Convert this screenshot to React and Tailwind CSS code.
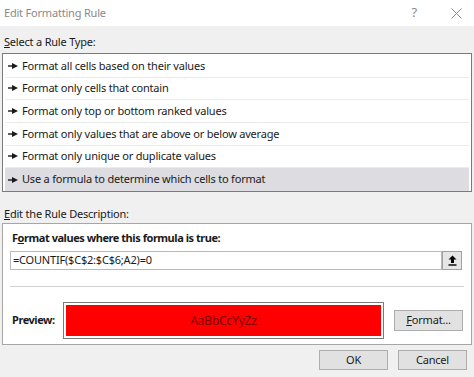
const RULES = [
  'Format all cells based on their values',
  'Format only cells that contain',
  'Format only top or bottom ranked values',
  'Format only values that are above or below average',
  'Format only unique or duplicate values',
  'Use a formula to determine which cells to format',
];

function Bullet() {
  return (
    <svg width="10" height="8" viewBox="0 0 10 8" className="mr-[4px] shrink-0">
      <rect x="0" y="3.3" width="5" height="1.4" fill="#1a1a1a" />
      <polygon points="4,1 10,4 4,7" fill="#1a1a1a" />
    </svg>
  );
}

export default function App() {
  return (
    <div
      className="flex h-[377px] w-[474px] flex-col overflow-hidden bg-[#f0f0f0] text-[11px] tracking-[-0.2px] text-[#1a1a1a]"
      style={{ fontFamily: "'Noto Sans', 'Open Sans', sans-serif" }}
    >
      <div className="flex h-[26px] shrink-0 items-center bg-white pl-[4px] pr-[12px] text-[#8a8a8a]">
        <span className="flex-1">Edit Formatting Rule</span>
        <span className="mr-[34px] text-[13px]">?</span>
        <svg width="11" height="11" viewBox="0 0 11 11">
          <path d="M0.5 0.5 L10.5 10.5 M10.5 0.5 L0.5 10.5" stroke="#8a8a8a" strokeWidth="1" />
        </svg>
      </div>

      <div className="flex flex-col px-[2px]">
        <div className="mt-[8px] h-[16px] pl-[2px] leading-[16px]">
          <span className="underline">S</span>elect a Rule Type:
        </div>
        <div className="mt-[3px] flex h-[139px] flex-col border border-[#7a7a7a] bg-white px-[2px] pt-[1px]">
          {RULES.map((r, i) => (
            <div
              key={r}
              className={
                'flex h-[22.67px] shrink-0 items-center pl-[3px] ' +
                (i === RULES.length - 1 ? 'bg-[#dcdce1]' : 'border-b border-[#ececec]')
              }
            >
              <Bullet />
              <span>{r}</span>
            </div>
          ))}
        </div>

        <div className="mt-[14px] h-[16px] pl-[2px] leading-[16px]">
          <span className="underline">E</span>dit the Rule Description:
        </div>
        <div className="mt-[1px] flex h-[122px] flex-col border border-[#a6a6a6] bg-white px-[7px]">
          <div className="mt-[6px] h-[16px] pl-[2px] font-bold leading-[16px] tracking-[-0.45px]">
            F<span className="underline">o</span>rmat values where this formula is true:
          </div>
          <div className="mt-[5px] flex h-[19px] items-stretch pr-[2px]">
            <div className="flex flex-1 items-center border border-[#b9b9b9] bg-white pl-[2px]">
              =COUNTIF($C$2:$C$6;A2)=0
            </div>
            <div className="flex w-[20px] items-center justify-center border border-[#a0a0a0] bg-[#e6e6e6]">
              <svg width="9" height="11" viewBox="0 0 9 11">
                <polygon points="4.5,0.5 8.5,4.5 6,4.5 6,8 3,8 3,4.5 0.5,4.5" fill="#000" />
                <rect x="0.5" y="9.3" width="8" height="1.4" fill="#000" />
              </svg>
            </div>
          </div>
          <div className="mt-[16px] h-px bg-[#d2d2d2]" />
          <div className="mt-[15px] flex items-center pl-[2px]">
            <span className="w-[51px] font-bold tracking-[-0.45px]">Preview:</span>
            <div className="h-[37px] w-[321px] border border-[#7a7a7a] bg-white p-[2px]">
              <div className="flex h-full items-center justify-center bg-[#ff0000] text-[12px] text-[#7a0000]">
                AaBbCcYyZz
              </div>
            </div>
            <button className="ml-[10px] flex h-[21px] w-[69px] items-center justify-center border border-[#adadad] bg-[#e1e1e1]">
              <span className="underline">F</span>ormat...
            </button>
          </div>
        </div>
      </div>

      <div className="mt-[5px] flex justify-end gap-[10px] pr-[7px]">
        <button className="flex h-[20px] w-[69px] items-center justify-center border border-[#adadad] bg-[#e1e1e1]">
          OK
        </button>
        <button className="flex h-[20px] w-[69px] items-center justify-center border border-[#adadad] bg-[#e1e1e1]">
          Cancel
        </button>
      </div>
    </div>
  );
}
